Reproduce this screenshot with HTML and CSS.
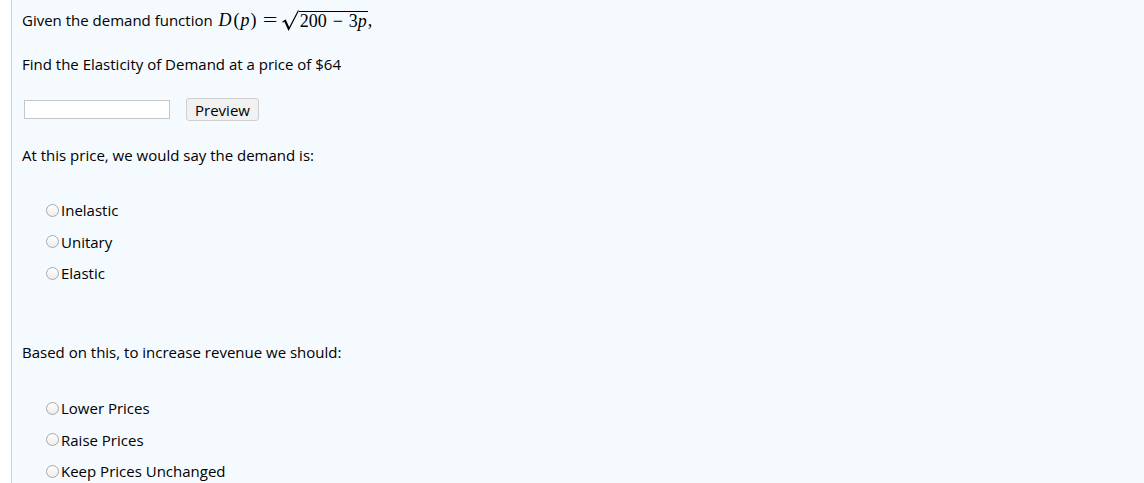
FILE: index.html
```html
<!DOCTYPE html>
<html>
<head>
<meta charset="utf-8">
<link rel="stylesheet" href="styles.css">
</head>
<body>
<div class="problem">
  <div class="line first">Given the demand function <span class="math"><i class="mD">D</i><span class="paren">(</span><i class="mp">p</i><span class="paren">)</span><span class="eq">=</span><span class="sqrt"><svg class="rad" width="17" height="21" viewBox="0 0 17 21"><path d="M0.5 12.2 L2.6 10.8 L6.6 19.6 L16.5 0.5" fill="none" stroke="#000" stroke-width="1.2" stroke-linejoin="miter"/><path d="M2.6 10.8 L3.4 10.4 L7.0 18.2" fill="none" stroke="#000" stroke-width="1.4"/></svg><span class="under">200<span class="minus">−</span>3<i>p</i></span></span>,</span></div>
  <div class="line">Find the Elasticity of Demand at a price of $64</div>
  <div class="answer-row">
    <input class="answer" type="text">
    <button class="preview" type="button">Preview</button>
  </div>
  <div class="line">At this price, we would say the demand is:</div>
  <div class="choices">
    <label class="choice"><span class="radio"></span>Inelastic</label>
    <label class="choice"><span class="radio"></span>Unitary</label>
    <label class="choice"><span class="radio"></span>Elastic</label>
  </div>
  <div class="line based">Based on this, to increase revenue we should:</div>
  <div class="choices">
    <label class="choice"><span class="radio"></span>Lower Prices</label>
    <label class="choice"><span class="radio"></span>Raise Prices</label>
    <label class="choice"><span class="radio"></span>Keep Prices Unchanged</label>
  </div>
</div>
</body>
</html>
```
FILE: styles.css
```css
html, body {
  margin: 0;
  padding: 0;
  background: #ffffff;
}
body {
  font-family: "Open Sans", "Liberation Sans", sans-serif;
  font-size: 15px;
  color: #000;
}
.problem {
  margin-left: 11px;
  border-left: 1px solid #c9d5dd;
  background: #f5faff;
  padding: 10px 0 20px 10px;
  min-height: 483px;
  box-sizing: border-box;
}
.line {
  line-height: 20px;
  height: 20px;
  margin-bottom: 24px;
  white-space: nowrap;
}
.math {
  font-family: "Liberation Serif", "DejaVu Serif", serif;
  font-size: 18px;
  margin-left: 2px;
}
.math i { font-style: italic; }
.mD { margin-right: 2px; }
.mp { margin: 0 1px 0 1px; }
.eq {
  display: inline-block;
  transform: scaleX(1.45);
  margin: 0 7px 0 8px;
}
.minus { margin: 0 6px; }
.sqrt {
  display: inline-flex;
  align-items: flex-start;
  vertical-align: -5px;
  height: 21px;
}
.rad { display: block; }
.under {
  border-top: 1.2px solid #000;
  padding: 0 1px 0 1px;
  display: block;
  line-height: 19px;
  height: 20px;
  box-sizing: border-box;
  margin-top: 0.5px;
}
.answer-row {
  display: flex;
  align-items: center;
  height: 23px;
  margin-bottom: 24px;
}
.answer {
  width: 146px;
  height: 19px;
  box-sizing: border-box;
  margin: 0 0 0 2px;
  border: 1px solid #c6c6c6;
  background: #fff;
  padding: 0;
}
.preview {
  margin-left: 16px;
  height: 23px;
  width: 73px;
  box-sizing: border-box;
  font-family: "Open Sans", "Liberation Sans", sans-serif;
  font-size: 15px;
  color: #000;
  background: #f1f1f1;
  border: 1px solid #cfcfcf;
  border-radius: 3px;
  padding: 0;
}
.choices {
  display: flex;
  flex-direction: column;
  gap: 11.5px;
  padding-left: 24px;
  margin-top: 35px;
}
.choice {
  display: flex;
  align-items: center;
  height: 20px;
  line-height: 20px;
}
.radio {
  width: 13px;
  height: 13px;
  border: 1px solid #a8a8a8;
  border-radius: 50%;
  background: linear-gradient(#ffffff, #ececec);
  margin-right: 2px;
  box-sizing: border-box;
}
.line.based {
  margin-top: 59px;
  margin-bottom: 0;
}
.based + .choices { margin-top: 36px; }
```
